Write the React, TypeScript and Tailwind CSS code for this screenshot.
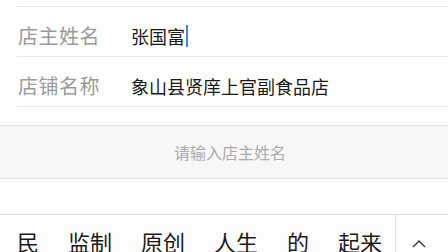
import React from 'react';

const candidates = ['民', '监制', '原创', '人生', '的', '起来'];

export default function App() {
  return (
    <div
      className="w-[448px] h-[252px] overflow-hidden bg-white flex flex-col"
      style={{ fontFamily: '"Noto Sans CJK SC", "Noto Sans", sans-serif' }}
    >
      {/* form rows */}
      <div className="pt-[6px]">
        <div className="ml-[17px] border-t border-[#e6e6e6]">
          <div className="h-[50px] pt-[8px] border-b border-[#e6e6e6] flex items-center">
            <span className="w-[114px] pl-[1px] text-[20px] tracking-[0.5px] text-[#9a9a9a] leading-none">店主姓名</span>
            <span className="text-[18px] text-[#1a1a1a] leading-none">张国富</span>
            <span className="w-[2px] h-[22px] bg-[#4f7ef0] ml-[1px]" />
          </div>
          <div className="h-[50px] pt-[8px] border-b border-[#e6e6e6] flex items-center">
            <span className="w-[114px] pl-[1px] text-[20px] tracking-[0.5px] text-[#9a9a9a] leading-none">店铺名称</span>
            <span className="text-[18px] text-[#1a1a1a] leading-none">象山县贤庠上官副食品店</span>
          </div>
        </div>
      </div>

      {/* hint bar */}
      <div className="mt-[18px] h-[55px] border-y border-[#e2e2e2] bg-[#f7f7f7] flex items-center justify-center pl-[12px]">
        <span className="text-[16px] text-[#ababab] leading-none">请输入店主姓名</span>
      </div>

      <div className="h-[35px]" />

      {/* keyboard candidate bar */}
      <div className="flex-1 border-t border-[#dcdcdc] bg-[#fdfdfd] flex">
        <div className="flex-1 flex items-start pt-[15px] pl-[17px] gap-[29px] text-[22px] text-[#1a1a1a] leading-none whitespace-nowrap">
          {candidates.map((c) => (
            <span key={c}>{c}</span>
          ))}
        </div>
        <div className="w-[53px] border-l border-[#e0e0e0] flex items-start justify-center pt-[24px] pr-[6px]">
          <svg width="14" height="9" viewBox="0 0 14 9" fill="none">
            <polyline points="1,8 7,2 13,8" stroke="#333" strokeWidth="1.3" />
          </svg>
        </div>
      </div>
    </div>
  );
}
